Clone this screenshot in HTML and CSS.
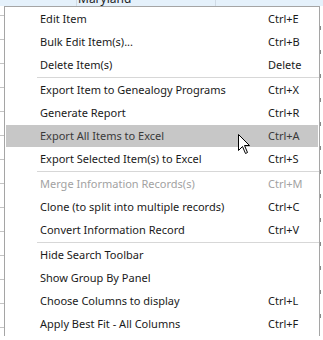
FILE: index.html
```html
<!DOCTYPE html>
<html>
<head>
<meta charset="utf-8">
<link rel="stylesheet" href="styles.css">
</head>
<body>
<div class="page">
  <div class="strip">
    <div class="cell cell-a"></div>
    <div class="cell cell-b"><span class="cell-text">Maryland</span></div>
    <div class="cell cell-c"></div>
  </div>
  <div class="under">
    <div class="left-lines"></div>
    <div class="mid"></div>
    <div class="right-ticks"></div>
  </div>

  <div class="menu">
    <div class="item"><span>Edit Item</span><span class="key">Ctrl+E</span></div>
    <div class="item"><span>Bulk Edit Item(s)...</span><span class="key">Ctrl+B</span></div>
    <div class="item"><span>Delete Item(s)</span><span class="key">Delete</span></div>
    <div class="sep"></div>
    <div class="item"><span>Export Item to Genealogy Programs</span><span class="key">Ctrl+X</span></div>
    <div class="item"><span>Generate Report</span><span class="key">Ctrl+R</span></div>
    <div class="item hl"><span>Export All Items to Excel</span><span class="key">Ctrl+A</span></div>
    <div class="item"><span>Export Selected Item(s) to Excel</span><span class="key">Ctrl+S</span></div>
    <div class="sep"></div>
    <div class="item disabled"><span>Merge Information Records(s)</span><span class="key">Ctrl+M</span></div>
    <div class="item"><span>Clone (to split into multiple records)</span><span class="key">Ctrl+C</span></div>
    <div class="item"><span>Convert Information Record</span><span class="key">Ctrl+V</span></div>
    <div class="sep"></div>
    <div class="item"><span>Hide Search Toolbar</span><span class="key"></span></div>
    <div class="item"><span>Show Group By Panel</span><span class="key"></span></div>
    <div class="item"><span>Choose Columns to display</span><span class="key">Ctrl+L</span></div>
    <div class="item"><span>Apply Best Fit - All Columns</span><span class="key">Ctrl+F</span></div>
  </div>

  <svg class="cursor" width="14" height="22" viewBox="0 0 14 22">
    <path d="M0.5 0.5 L0.5 16.5 L4.5 12.5 L7.5 19.5 L9.5 18.5 L6.5 11.5 L11.5 11.5 Z" fill="#fff" stroke="#000" stroke-width="1" stroke-linejoin="miter"/>
  </svg>
</div>
</body>
</html>
```
FILE: styles.css
```css
* { box-sizing: border-box; }

html, body {
  margin: 0;
  padding: 0;
  background: #fff;
}

body {
  width: 323px;
  height: 340px;
  overflow: hidden;
  font-family: "Noto Sans", "Open Sans", sans-serif;
  font-size: 11px;
  color: #1a1a1a;
}

.page {
  position: relative;
  width: 323px;
  height: 340px;
}

.strip {
  display: flex;
  height: 6px;
  background: #e5f1fb;
  overflow: hidden;
}

.cell {
  height: 100%;
  border-right: 1px solid #d0dbe6;
}

.cell-a { width: 77px; }
.cell-b { width: 139px; padding-left: 1px; }
.cell-c { flex: 1; border-right: none; }

.cell-text {
  display: block;
  font-size: 12px;
  line-height: 14px;
  margin-top: -8px;
  color: #222;
}

.under {
  display: flex;
  height: 329px;
}

.left-lines {
  width: 4px;
  background-image: linear-gradient(to bottom, transparent 23px, #c4c4c4 23px);
  background-size: 4px 24px;
  background-position: 0 10px;
  background-repeat: repeat-y;
}

.mid { flex: 1; }

.right-ticks {
  width: 4px;
  background-image: linear-gradient(to right, transparent 1px, #888 1px, #888 2px, transparent 2px);
  background-size: 4px 24px;
  background-position: 0 20px;
  background-repeat: repeat-y;
  -webkit-mask-image: linear-gradient(to bottom, #000 4px, transparent 4px);
  -webkit-mask-size: 4px 24px;
  -webkit-mask-position: 0 20px;
  -webkit-mask-repeat: repeat-y;
}

.menu {
  position: absolute;
  left: 4px;
  top: 6px;
  width: 316px;
  background: #fff;
  border: 1px solid #a5a5a5;
  border-bottom: none;
  padding-top: 1px;
}

.item {
  display: grid;
  grid-template-columns: 1fr 50px;
  align-items: center;
  height: 22px;
  line-height: 22px;
  margin: 0 1px 1px 1px;
  padding-left: 34px;
  white-space: nowrap;
}

.item.hl {
  background: #c7c7c7;
  color: #3a3a3a;
}

.item.disabled {
  color: #a2a2a2;
}

.sep {
  height: 1px;
  background: #d7d7d7;
  margin: 0 0 1px 32px;
}

.cursor {
  position: absolute;
  left: 238px;
  top: 134px;
}
```
